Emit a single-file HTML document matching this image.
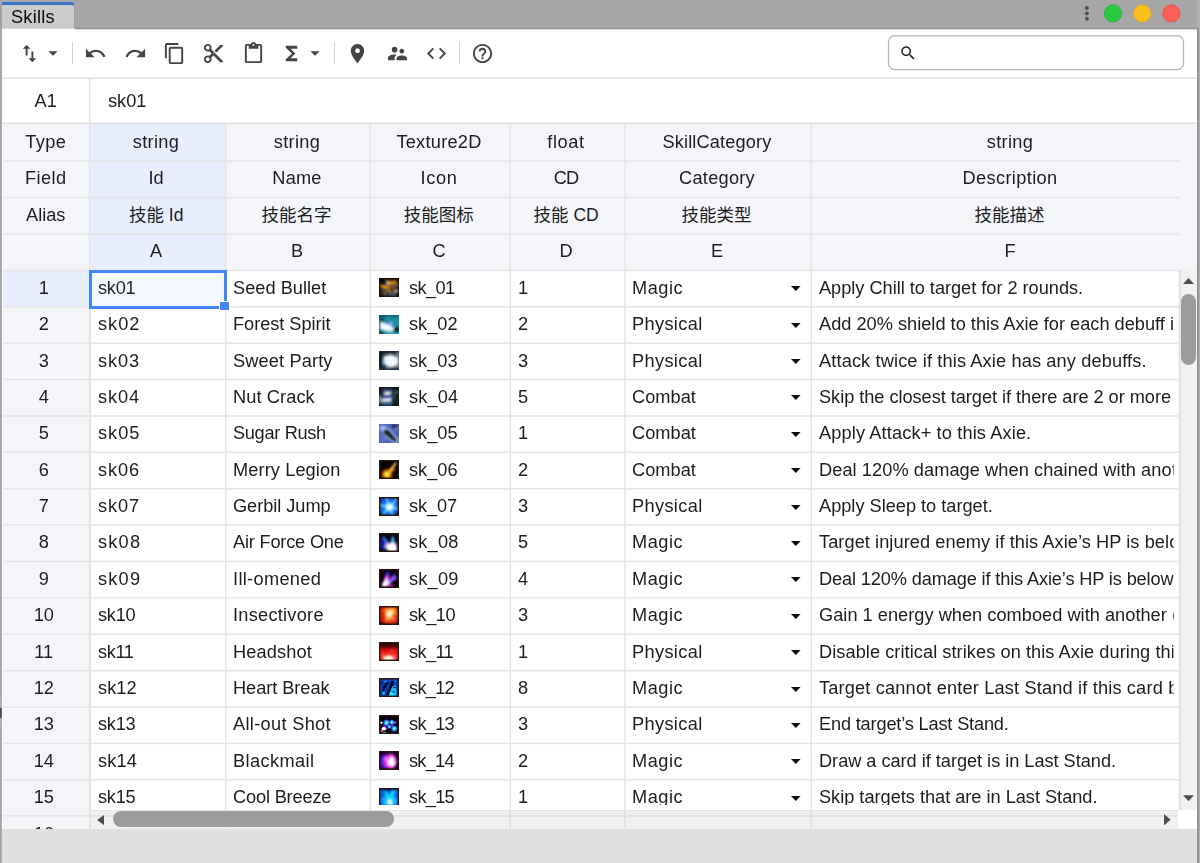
<!DOCTYPE html>
<html lang="en"><head><meta charset="utf-8"><title>Skills</title>
<style>

*{box-sizing:border-box;margin:0;padding:0}
html,body{width:1200px;height:863px;overflow:hidden;background:#e0e0e0}
body{position:relative;font-family:"Liberation Sans", "Noto Sans CJK SC", sans-serif;font-size:17.5px;color:#1d1d1f;line-height:1}
.abs{position:absolute}
.t{position:absolute;white-space:nowrap;line-height:20px;height:20px;transform:scaleX(1.04);transform-origin:0 50%}
.c{text-align:center;transform-origin:50% 50%}
.n{transform:none}
.vl{position:absolute;width:1px;background:#e1e1e1}
.hl{position:absolute;height:1px;background:#e1e1e1}
.ic{position:absolute;width:23px;height:23px;fill:#454545}
.sep{position:absolute;width:1px;top:41.5px;height:22.5px;background:#d2d2d2}
.dd{position:absolute;width:9.6px;height:5px}
.sk{position:absolute;width:20px;height:19px;overflow:hidden}

</style></head><body>
<div class="abs" style="left:0;top:0;width:1200px;height:29px;background:#a6a6a6"></div>
<div class="abs" style="left:1.7px;top:1.7px;width:73.3px;height:27px;background:#cbcbcb;border-top:3px solid #3a74c9;border-radius:0 4.5px 0 0;border-right:1px solid #a0a0a0"></div>
<div class="t" style="left:10.7px;top:6.5px;color:#0b0b0b;letter-spacing:.2px">Skills</div>
<svg class="abs" style="left:1070px;top:0;width:127px;height:28px" viewBox="1070 0 127 28"><circle cx="1086.900" cy="8" r="1.950" fill="#4e4e4e"/><circle cx="1086.900" cy="13.400" r="1.950" fill="#4e4e4e"/><circle cx="1086.900" cy="18.800" r="1.950" fill="#4e4e4e"/><circle cx="1113.100" cy="13.400" r="8.600" fill="#2aca44" stroke="#22b03a" stroke-width=".8"/><circle cx="1142.200" cy="13.400" r="8.600" fill="#fdc01a" stroke="#e6aa14" stroke-width=".8"/><circle cx="1171.300" cy="13.400" r="8.600" fill="#fe5f58" stroke="#e84e47" stroke-width=".8"/></svg>
<div class="abs" style="left:1.7px;top:28px;width:1195.4px;height:95.1px;background:#fff"></div>
<svg class="abs" style="left:0;top:26px;width:1200px;height:6px" viewBox="0 26 1200 6"><rect x="1.700" y="28" width="73.300" height=".75" fill="#cbcbcb"/><rect x="75" y="27.800" width="1125" height="1.500" fill="#919191"/></svg>
<svg class="abs" style="left:0;top:0;width:1200px;height:130px" viewBox="0 0 1200 130"><g stroke="#e1e1e1" stroke-width="1.46"><path d="M1.700 78.200H1197.300"/><path d="M1.700 123.300H1197.300"/><path d="M89.600 78.200V123.300"/></g></svg>
<svg class="ic" style="left:18.10px;top:41.90px;width:23px;height:23px" viewBox="0 0 24 24"><path d="M16 17.01V10h-2v7.01h-3L15 21l4-3.99h-3zM9 3L5 6.99h3V14h2V6.99h3L9 3z"/></svg>
<svg class="ic" style="left:41.70px;top:42.30px;width:22px;height:22px" viewBox="0 0 24 24"><path d="M7 10l5 5 5-5z"/></svg>
<div class="sep" style="left:72.1px"></div>
<svg class="ic" style="left:84.00px;top:41.90px;width:23px;height:23px" viewBox="0 0 24 24"><path d="M12.5 8c-2.65 0-5.05.99-6.9 2.6L2 7v9h9l-3.62-3.62c1.39-1.16 3.16-1.88 5.12-1.88 3.54 0 6.55 2.31 7.6 5.5l2.37-.78C21.08 11.03 17.15 8 12.5 8z"/></svg>
<svg class="ic" style="left:123.70px;top:41.90px;width:23px;height:23px" viewBox="0 0 24 24"><path d="M18.4 10.6C16.55 8.99 14.15 8 11.5 8c-4.65 0-8.58 3.03-9.96 7.22L3.9 16c1.05-3.19 4.05-5.5 7.6-5.5 1.95 0 3.73.72 5.12 1.88L13 16h9V7l-3.6 3.6z"/></svg>
<svg class="ic" style="left:162.70px;top:41.90px;width:23px;height:23px" viewBox="0 0 24 24"><path d="M16 1H4c-1.1 0-2 .9-2 2v14h2V3h12V1zm3 4H8c-1.1 0-2 .9-2 2v14c0 1.1.9 2 2 2h11c1.1 0 2-.9 2-2V7c0-1.1-.9-2-2-2zm0 16H8V7h11v14z"/></svg>
<svg class="ic" style="left:202.00px;top:41.90px;width:23px;height:23px" viewBox="0 0 24 24"><path d="M9.64 7.64c.23-.5.36-1.05.36-1.64 0-2.21-1.79-4-4-4S2 3.79 2 6s1.79 4 4 4c.59 0 1.14-.13 1.64-.36L10 12l-2.36 2.36C7.14 14.13 6.59 14 6 14c-2.21 0-4 1.79-4 4s1.79 4 4 4 4-1.79 4-4c0-.59-.13-1.14-.36-1.64L12 14l7 7h3v-1L9.64 7.64zM6 8c-1.1 0-2-.89-2-2s.9-2 2-2 2 .89 2 2-.9 2-2 2zm0 12c-1.1 0-2-.89-2-2s.9-2 2-2 2 .89 2 2-.9 2-2 2zm6-7.5c-.28 0-.5-.22-.5-.5s.22-.5.5-.5.5.22.5.5-.22.5-.5.5zM19 3l-6 6 2 2 7-7V3z"/></svg>
<svg class="ic" style="left:241.50px;top:42.00px;width:23px;height:23px" viewBox="0 0 24 24"><path d="M19 2h-4.18C14.4.84 13.3 0 12 0c-1.3 0-2.4.84-2.82 2H5c-1.1 0-2 .9-2 2v16c0 1.1.9 2 2 2h14c1.1 0 2-.9 2-2V4c0-1.1-.9-2-2-2zm-7 0c.55 0 1 .45 1 1s-.45 1-1 1-1-.45-1-1 .45-1 1-1zm7 18H5V4h2v3h10V4h2v16z"/></svg>
<svg class="ic" style="left:279.70px;top:41.90px;width:23px;height:23px" viewBox="0 0 24 24"><path d="M18 4H6v2l6.5 6L6 18v2h12v-3h-7l5-5-5-5h7z"/></svg>
<svg class="ic" style="left:303.75px;top:42.30px;width:22px;height:22px" viewBox="0 0 24 24"><path d="M7 10l5 5 5-5z"/></svg>
<div class="sep" style="left:334.3px"></div>
<svg class="ic" style="left:345.90px;top:41.90px;width:23px;height:23px" viewBox="0 0 24 24"><path d="M12 2C8.13 2 5 5.13 5 9c0 5.25 7 13 7 13s7-7.75 7-13c0-3.87-3.13-7-7-7zm0 9.5c-1.38 0-2.5-1.12-2.5-2.5s1.12-2.5 2.5-2.5 2.5 1.12 2.5 2.5-1.12 2.5-2.5 2.5z"/></svg>
<svg class="ic" style="left:385.50px;top:41.90px;width:23px;height:23px" viewBox="0 0 24 24"><path d="M16.5 12c1.38 0 2.49-1.12 2.49-2.5S17.88 7 16.5 7C15.12 7 14 8.12 14 9.5s1.12 2.5 2.5 2.5zM9 11c1.66 0 2.99-1.34 2.99-3S10.66 5 9 5C7.34 5 6 6.34 6 8s1.34 3 3 3zm7.5 3c-1.83 0-5.5.92-5.5 2.75V19h11v-2.250c0-1.83-3.67-2.75-5.5-2.75zM9 13c-2.33 0-7 1.17-7 3.5V19h7v-2.25c0-.85.33-2.34 2.37-3.47C10.5 13.1 9.66 13 9 13z"/></svg>
<svg class="ic" style="left:424.50px;top:41.90px;width:23px;height:23px" viewBox="0 0 24 24"><path d="M9.4 16.6L4.8 12l4.6-4.6L8 6l-6 6 6 6 1.4-1.4zm5.2 0l4.6-4.6-4.6-4.6L16 6l6 6-6 6-1.4-1.4z"/></svg>
<div class="sep" style="left:459.3px"></div>
<svg class="ic" style="left:470.90px;top:41.90px;width:23px;height:23px" viewBox="0 0 24 24"><path d="M11 18h2v-2h-2v2zm1-16C6.48 2 2 6.48 2 12s4.48 10 10 10 10-4.48 10-10S17.52 2 12 2zm0 18c-4.41 0-8-3.59-8-8s3.59-8 8-8 8 3.59 8 8-3.59 8-8 8zm0-14c-2.21 0-4 1.79-4 4h2c0-1.1.9-2 2-2s2 .9 2 2c0 2-3 1.75-3 5h2c0-2.250 3-2.500 3-5 0-2.210-1.790-4-4-4z"/></svg>
<svg class="abs" style="left:880px;top:30px;width:312px;height:46px" viewBox="880 30 312 46"><rect x="888.500" y="35.900" width="295" height="33.600" rx="5.800" fill="#fff" stroke="#b6b6b6" stroke-width="1.250"/><path d="M893 35.600H1179" stroke="#c4c4c4" stroke-width=".7" fill="none"/></svg>
<svg class="ic" style="left:898.9px;top:43.7px;width:18.1px;height:18.1px;fill:#262626" viewBox="0 0 24 24"><path d="M15.5 14h-.79l-.28-.27C15.41 12.59 16 11.11 16 9.500 16 5.910 13.090 3 9.500 3S3 5.910 3 9.500 5.910 16 9.500 16c1.610 0 3.090-.590 4.230-1.570l.270.280v.790l5 4.990L20.490 19l-4.990-5zm-6 0C7.010 14 5 11.990 5 9.500S7.010 5 9.500 5 14 7.010 14 9.500 11.990 14 9.500 14z"/></svg>
<div class="t c" style="left:1.7px;width:87.5px;top:90.9px">A1</div>
<div class="t" style="left:108px;top:90.9px">sk01</div>
<div class="abs" style="left:1.7px;top:124.1px;width:1195.4px;height:146.2px;background:#f4f5f9"></div>
<div class="abs" style="left:1.7px;top:270.3px;width:88px;height:558.3px;background:#f4f5f9"></div>
<div class="abs" style="left:90.7px;top:271.3px;width:1089.0px;height:557.3px;background:#fff"></div>
<div class="abs" style="left:90.7px;top:124.1px;width:135.1px;height:146.2px;background:#e8eefd"></div>
<div class="abs" style="left:1.7px;top:271.3px;width:88px;height:35.4px;background:#e8eefd"></div>
<svg class="abs" style="left:0;top:0;width:1200px;height:863px" viewBox="0 0 1200 863"><g stroke="#e5e5e5" stroke-width="1.46" fill="none"><path d="M1.700 161.10H1179.7"/><path d="M1.700 197.50H1179.7"/><path d="M1.700 233.90H1179.7"/><path d="M1.700 270.50H1179.7"/><path d="M1.700 306.79H1179.7"/><path d="M1.700 343.17H1179.7"/><path d="M1.700 379.56H1179.7"/><path d="M1.700 415.94H1179.7"/><path d="M1.700 452.33H1179.7"/><path d="M1.700 488.72H1179.7"/><path d="M1.700 525.10H1179.7"/><path d="M1.700 561.49H1179.7"/><path d="M1.700 597.87H1179.7"/><path d="M1.700 634.26H1179.7"/><path d="M1.700 670.65H1179.7"/><path d="M1.700 707.03H1179.7"/><path d="M1.700 743.42H1179.7"/><path d="M1.700 779.80H1179.7"/><path d="M1.700 815.89H89.7"/><path d="M89.70 124.1V828.6"/><path d="M225.80 124.1V805.0"/><path d="M370.30 124.1V805.0"/><path d="M510.30 124.1V805.0"/><path d="M625.00 124.1V805.0"/><path d="M811.30 124.1V805.0"/><path d="M1179.30 270.3V810.0"/></g></svg>
<div class="t c" style="left:1.7px;width:87.5px;top:131.8px;letter-spacing:0.321px">Type</div>
<div class="t c" style="left:56.2px;width:200px;top:131.8px;letter-spacing:0.314px">string</div>
<div class="t c" style="left:196.6px;width:200px;top:131.8px;letter-spacing:0.314px">string</div>
<div class="t c" style="left:338.8px;width:200px;top:131.8px;letter-spacing:0.240px">Texture2D</div>
<div class="t c" style="left:466.1px;width:200px;top:131.8px;letter-spacing:0.553px">float</div>
<div class="t c" style="left:616.6px;width:200px;top:131.8px;letter-spacing:0.144px">SkillCategory</div>
<div class="t c" style="left:909.5px;width:200px;top:131.8px;letter-spacing:0.314px">string</div>
<div class="t c" style="left:1.7px;width:87.5px;top:168.3px;letter-spacing:0.385px">Field</div>
<div class="t c" style="left:56.2px;width:200px;top:168.3px">Id</div>
<div class="t c" style="left:196.6px;width:200px;top:168.3px;letter-spacing:0.192px">Name</div>
<div class="t c" style="left:338.8px;width:200px;top:168.3px;letter-spacing:0.641px">Icon</div>
<div class="t c" style="left:466.1px;width:200px;top:168.3px;letter-spacing:-0.865px">CD</div>
<div class="t c" style="left:616.6px;width:200px;top:168.3px;letter-spacing:0.247px">Category</div>
<div class="t c" style="left:909.5px;width:200px;top:168.3px;letter-spacing:0.356px">Description</div>
<div class="t c" style="left:1.7px;width:87.5px;top:204.7px">Alias</div>
<div class="t c n" style="left:56.2px;width:200px;top:204.7px">技能 Id</div>
<div class="t c n" style="left:196.6px;width:200px;top:204.7px">技能名字</div>
<div class="t c n" style="left:338.8px;width:200px;top:204.7px">技能图标</div>
<div class="t c n" style="left:466.1px;width:200px;top:204.7px">技能 CD</div>
<div class="t c n" style="left:616.6px;width:200px;top:204.7px">技能类型</div>
<div class="t c n" style="left:909.5px;width:200px;top:204.7px">技能描述</div>
<div class="t c" style="left:56.2px;width:200px;top:241.1px">A</div>
<div class="t c" style="left:196.6px;width:200px;top:241.1px">B</div>
<div class="t c" style="left:338.8px;width:200px;top:241.1px">C</div>
<div class="t c" style="left:466.1px;width:200px;top:241.1px">D</div>
<div class="t c" style="left:616.6px;width:200px;top:241.1px">E</div>
<div class="t c" style="left:909.5px;width:200px;top:241.1px">F</div>
<div class="t c" style="left:0.3px;width:87.5px;top:277.74px">1</div>
<div class="t" style="left:97.8px;top:277.74px;letter-spacing:-0.256px">sk01</div>
<div class="t" style="left:232.7px;top:277.74px;letter-spacing:0.018px">Seed Bullet</div>
<div class="sk" style="left:378.6px;top:278.20px"><svg width="20" height="19" viewBox="0 0 20 19"><defs><filter id="b1" x="-30%" y="-30%" width="160%" height="160%"><feGaussianBlur stdDeviation="0.95"/></filter></defs><rect width="20" height="19" fill="#15100c"/><g filter="url(#b1)"><polygon points="7,3.5 17,3 18,6 9,7" fill="#e8920f"/><ellipse cx="8.3" cy="4.8" rx="1.5" ry="1.2" fill="#f4ecd0"/><polygon points="1.5,6.5 9,7.5 13,10 6,11 1.5,9" fill="#dd970f"/><ellipse cx="14.5" cy="9.5" rx="2" ry="1.2" fill="#c84a10"/><polygon points="9,7 16,7.500 18,9 11,8.500" fill="#6a7680" opacity="0.8"/><polygon points="8,11 13,12.5 12,14.5 8.5,13.5" fill="#d8a020"/><rect x="2.5" y="10.5" width="2.5" height="6.5" fill="#4a443e"/><rect x="6.2" y="12" width="1.2" height="4.5" fill="#c8c0b0"/><polygon points="14,12 19,11.5 19,14 15,14.5" fill="#c0bca8"/><rect x="9" y="15" width="8" height="2" fill="#5a6878"/><ellipse cx="18" cy="7" rx="1.3" ry="2" fill="#7a7040"/><rect x="0" y="0" width="20" height="1.6" fill="#0c0806"/><rect x="0" y="17.6" width="20" height="1.4" fill="#0c0806"/></g></svg></div>
<div class="t" style="left:409.1px;top:277.74px;letter-spacing:-0.590px">sk_01</div>
<div class="t" style="left:518.2px;top:277.74px">1</div>
<div class="t" style="left:631.6px;top:277.74px;letter-spacing:0.481px">Magic</div>
<svg class="dd" style="left:791.1px;top:286.25px" viewBox="0 0 9.600 5"><path d="M0 0H9.600L4.800 5z" fill="#0c0c0c"/></svg>
<div class="t" style="left:819.3px;top:277.74px;width:341.44px;overflow:hidden;letter-spacing:-0.026px">Apply Chill to target for 2 rounds.</div>
<div class="t c" style="left:0.3px;width:87.5px;top:314.13px">2</div>
<div class="t" style="left:97.8px;top:314.13px;letter-spacing:0.961px">sk02</div>
<div class="t" style="left:232.7px;top:314.13px;letter-spacing:-0.040px">Forest Spirit</div>
<div class="sk" style="left:378.6px;top:314.59px"><svg width="20" height="19" viewBox="0 0 20 19"><defs><filter id="b2" x="-30%" y="-30%" width="160%" height="160%"><feGaussianBlur stdDeviation="1"/></filter><linearGradient id="g2" x1="0" x2="1" y1="0" y2="0"><stop offset="0" stop-color="#0f6a7c"/><stop offset="1" stop-color="#1c98b0"/></linearGradient></defs><rect width="20" height="19" fill="url(#g2)"/><g filter="url(#b2)"><rect x="0" y="0" width="20" height="1.5" fill="#08303a"/><ellipse cx="3.5" cy="5.5" rx="2" ry="1.5" fill="#0a2a34"/><polygon points="8,1 12,1 7,8 5,8" fill="#2ab0b0" opacity="0.6"/><ellipse cx="11.5" cy="8.5" rx="2.5" ry="2.5" fill="#7088e0"/><polygon points="1,7.5 6,8 11,10 15.5,13 15,16.5 8,16.5 1,14" fill="#e4f2ff"/><ellipse cx="6" cy="12" rx="4" ry="2.6" fill="#f4faff"/><polygon points="0,15 5,17 5,19 0,19" fill="#0a3a48"/><polygon points="15.5,12.5 20,12 20,17.5 13.5,17.5" fill="#0a1216"/><rect x="5" y="17.6" width="15" height="1.4" fill="#30b8d0"/><ellipse cx="3" cy="7.5" rx="0.8" ry="0.8" fill="#fff"/><ellipse cx="12.5" cy="8" rx="0.7" ry="0.7" fill="#e8f0ff"/></g></svg></div>
<div class="t" style="left:409.1px;top:314.13px;letter-spacing:-0.013px">sk_02</div>
<div class="t" style="left:518.2px;top:314.13px">2</div>
<div class="t" style="left:631.6px;top:314.13px;letter-spacing:0.330px">Physical</div>
<svg class="dd" style="left:791.1px;top:322.64px" viewBox="0 0 9.600 5"><path d="M0 0H9.600L4.800 5z" fill="#0c0c0c"/></svg>
<div class="t" style="left:819.3px;top:314.13px;width:341.44px;overflow:hidden;letter-spacing:0.005px">Add 20% shield to this Axie for each debuff it has.</div>
<div class="t c" style="left:0.3px;width:87.5px;top:350.51px">3</div>
<div class="t" style="left:97.8px;top:350.51px;letter-spacing:0.833px">sk03</div>
<div class="t" style="left:232.7px;top:350.51px;letter-spacing:0.126px">Sweet Party</div>
<div class="sk" style="left:378.6px;top:350.97px"><svg width="20" height="19" viewBox="0 0 20 19"><defs><filter id="b3" x="-30%" y="-30%" width="160%" height="160%"><feGaussianBlur stdDeviation="1"/></filter></defs><rect width="20" height="19" fill="#2a3846"/><g filter="url(#b3)"><rect x="0" y="0" width="3.5" height="19" fill="#0e1820"/><rect x="0" y="0" width="20" height="2.5" fill="#182430"/><rect x="17.5" y="2" width="2.5" height="15" fill="#8a98a6"/><ellipse cx="11.8" cy="10" rx="7.3" ry="6.2" fill="#e9f3fc"/><ellipse cx="8" cy="7" rx="3.2" ry="2.6" fill="#eef6fd"/><ellipse cx="13.5" cy="11.5" rx="5" ry="4" fill="#f4f9fe"/><ellipse cx="4.8" cy="11" rx="0.9" ry="2.5" fill="#6accff"/><ellipse cx="4.6" cy="5.6" rx="0.8" ry="0.8" fill="#8a6a40"/><rect x="0" y="16.8" width="20" height="2.2" fill="#1a2a3c"/><ellipse cx="8" cy="17.6" rx="2" ry="0.7" fill="#5a7aa0"/></g></svg></div>
<div class="t" style="left:409.1px;top:350.51px;letter-spacing:-0.014px">sk_03</div>
<div class="t" style="left:518.2px;top:350.51px">3</div>
<div class="t" style="left:631.6px;top:350.51px;letter-spacing:0.330px">Physical</div>
<svg class="dd" style="left:791.1px;top:359.02px" viewBox="0 0 9.600 5"><path d="M0 0H9.600L4.800 5z" fill="#0c0c0c"/></svg>
<div class="t" style="left:819.3px;top:350.51px;width:341.44px;overflow:hidden;letter-spacing:0.122px">Attack twice if this Axie has any debuffs.</div>
<div class="t c" style="left:0.3px;width:87.5px;top:386.90px">4</div>
<div class="t" style="left:97.8px;top:386.90px;letter-spacing:0.898px">sk04</div>
<div class="t" style="left:232.7px;top:386.90px;letter-spacing:0.096px">Nut Crack</div>
<div class="sk" style="left:378.6px;top:387.36px"><svg width="20" height="19" viewBox="0 0 20 19"><defs><filter id="b4" x="-30%" y="-30%" width="160%" height="160%"><feGaussianBlur stdDeviation="0.9"/></filter></defs><rect width="20" height="19" fill="#0e161e"/><g filter="url(#b4)"><rect x="4" y="2.5" width="9.5" height="15.5" fill="#3a5a88"/><rect x="5" y="3" width="8" height="0.8" fill="#4a5ab0"/><polygon points="6,5.2 11.5,5 11.5,7.5 5,8" fill="#f0f0ee"/><rect x="4.5" y="8" width="9" height="1.5" fill="#283848"/><rect x="4" y="9.5" width="9.5" height="2" fill="#4868d8"/><polygon points="2.5,12 12,11.5 12,14 3,14.5" fill="#f4f8fa"/><rect x="3" y="15" width="9.5" height="3" fill="#3a7090"/><rect x="13.5" y="2" width="6.5" height="16" fill="#16241e"/><rect x="14" y="6" width="2" height="4" fill="#2a4a30"/><rect x="16.5" y="4.5" width="1.5" height="1.5" fill="#8a9090"/><rect x="15.5" y="10.5" width="1.2" height="1.2" fill="#7a8080"/><polygon points="0,8 2.5,10 2.5,16 0,16" fill="#98a0a0"/><rect x="0" y="0" width="3.5" height="8" fill="#1a2024"/><rect x="0" y="0" width="20" height="1.6" fill="#0a0e12"/><rect x="0" y="17.8" width="20" height="1.2" fill="#0a0e12"/></g></svg></div>
<div class="t" style="left:409.1px;top:386.90px;letter-spacing:0.131px">sk_04</div>
<div class="t" style="left:518.2px;top:386.90px">5</div>
<div class="t" style="left:631.6px;top:386.90px;letter-spacing:0.019px">Combat</div>
<svg class="dd" style="left:791.1px;top:395.41px" viewBox="0 0 9.600 5"><path d="M0 0H9.600L4.800 5z" fill="#0c0c0c"/></svg>
<div class="t" style="left:819.3px;top:386.90px;width:341.44px;overflow:hidden;letter-spacing:-0.043px">Skip the closest target if there are 2 or more enemies.</div>
<div class="t c" style="left:0.3px;width:87.5px;top:423.28px">5</div>
<div class="t" style="left:97.8px;top:423.28px;letter-spacing:0.961px">sk05</div>
<div class="t" style="left:232.7px;top:423.28px;letter-spacing:-0.310px">Sugar Rush</div>
<div class="sk" style="left:378.6px;top:423.74px"><svg width="20" height="19" viewBox="0 0 20 19"><defs><filter id="b5" x="-30%" y="-30%" width="160%" height="160%"><feGaussianBlur stdDeviation="0.8"/></filter></defs><rect width="20" height="19" fill="#4a62b8"/><g filter="url(#b5)"><ellipse cx="4" cy="4" rx="4" ry="3" fill="#8aa2e8"/><ellipse cx="3" cy="4.5" rx="0.8" ry="0.8" fill="#e8f0ff"/><ellipse cx="6" cy="4" rx="0.8" ry="0.8" fill="#e8f0ff"/><polygon points="12.5,1 18,0.5 19,3 14,4.5" fill="#262640"/><polygon points="15,6 18.5,2.5 19,4 16,8" fill="#8a7ae0"/><ellipse cx="4" cy="15" rx="4" ry="3" fill="#5a72d0"/><ellipse cx="17" cy="10" rx="2" ry="2.5" fill="#3a52a8"/><polygon points="2.5,6.5 7.5,3.5 11,5 19.5,15.5 19.5,19 14,19 3.5,9.5" fill="#a6ccf2"/><polygon points="3.6,7.2 7.5,4.7 10.4,6.2 18.4,16.2 17.5,18 14.2,17.6 4.6,9.4" fill="#1e1a2a"/></g></svg></div>
<div class="t" style="left:409.1px;top:423.28px;letter-spacing:-0.014px">sk_05</div>
<div class="t" style="left:518.2px;top:423.28px">1</div>
<div class="t" style="left:631.6px;top:423.28px;letter-spacing:0.019px">Combat</div>
<svg class="dd" style="left:791.1px;top:431.79px" viewBox="0 0 9.600 5"><path d="M0 0H9.600L4.800 5z" fill="#0c0c0c"/></svg>
<div class="t" style="left:819.3px;top:423.28px;width:341.44px;overflow:hidden;letter-spacing:0.121px">Apply Attack+ to this Axie.</div>
<div class="t c" style="left:0.3px;width:87.5px;top:459.67px">6</div>
<div class="t" style="left:97.8px;top:459.67px;letter-spacing:0.833px">sk06</div>
<div class="t" style="left:232.7px;top:459.67px;letter-spacing:0.097px">Merry Legion</div>
<div class="sk" style="left:378.6px;top:460.13px"><svg width="20" height="19" viewBox="0 0 20 19"><defs><filter id="b6" x="-30%" y="-30%" width="160%" height="160%"><feGaussianBlur stdDeviation="1"/></filter><radialGradient id="g6"><stop offset="0" stop-color="#fff34a"/><stop offset=".35" stop-color="#ffb010"/><stop offset=".7" stop-color="#e05a08" stop-opacity=".8"/><stop offset="1" stop-color="#e05a08" stop-opacity="0"/></radialGradient></defs><rect width="20" height="19" fill="#080303"/><g filter="url(#b6)"><circle cx="8" cy="14.500" r="6.500" fill="url(#g6)"/><ellipse cx="14" cy="10" rx="2.5" ry="2" fill="#c8400a" opacity="0.8"/><polygon points="7.5,13 16.3,2.3 17.7,3.5 11.2,14" fill="#f59a1a"/><polygon points="9.5,11.5 16.5,3 17,3.5 10.5,12" fill="#ffe46a"/><ellipse cx="16.8" cy="3" rx="0.8" ry="0.8" fill="#d8f080"/><ellipse cx="8" cy="14.5" rx="2.4" ry="2" fill="#fff34a"/></g><rect x="0.700" y="0.700" width="18.600" height="17.600" fill="none" stroke="#2c170e" stroke-width="1.400"/></svg></div>
<div class="t" style="left:409.1px;top:459.67px;letter-spacing:-0.014px">sk_06</div>
<div class="t" style="left:518.2px;top:459.67px">2</div>
<div class="t" style="left:631.6px;top:459.67px;letter-spacing:0.019px">Combat</div>
<svg class="dd" style="left:791.1px;top:468.18px" viewBox="0 0 9.600 5"><path d="M0 0H9.600L4.800 5z" fill="#0c0c0c"/></svg>
<div class="t" style="left:819.3px;top:459.67px;width:341.44px;overflow:hidden;letter-spacing:0.065px">Deal 120% damage when chained with another card.</div>
<div class="t c" style="left:0.3px;width:87.5px;top:496.06px">7</div>
<div class="t" style="left:97.8px;top:496.06px;letter-spacing:0.833px">sk07</div>
<div class="t" style="left:232.7px;top:496.06px;letter-spacing:-0.048px">Gerbil Jump</div>
<div class="sk" style="left:378.6px;top:496.52px"><svg width="20" height="19" viewBox="0 0 20 19"><defs><filter id="b7" x="-30%" y="-30%" width="160%" height="160%"><feGaussianBlur stdDeviation="1"/></filter><radialGradient id="g7" cx=".52" cy=".53" r=".62"><stop offset="0" stop-color="#fff"/><stop offset=".3" stop-color="#4ec4ff"/><stop offset=".62" stop-color="#0f4ee6"/><stop offset="1" stop-color="#040a3c"/></radialGradient></defs><rect width="20" height="19" fill="#040a3c"/><g filter="url(#b7)"><rect width="20" height="19" fill="url(#g7)"/><line x1="10.500" y1="10" x2="21.26" y2="12.29" stroke="#62dcff" stroke-width="1.4"/><line x1="10.500" y1="10" x2="18.67" y2="17.36" stroke="#1a6cf8" stroke-width="2.2"/><line x1="10.500" y1="10" x2="13.90" y2="20.46" stroke="#62dcff" stroke-width="1.4"/><line x1="10.500" y1="10" x2="8.21" y2="20.76" stroke="#1a6cf8" stroke-width="2.2"/><line x1="10.500" y1="10" x2="3.14" y2="18.17" stroke="#62dcff" stroke-width="1.4"/><line x1="10.500" y1="10" x2="0.04" y2="13.40" stroke="#1a6cf8" stroke-width="2.2"/><line x1="10.500" y1="10" x2="-0.26" y2="7.71" stroke="#62dcff" stroke-width="1.4"/><line x1="10.500" y1="10" x2="2.33" y2="2.64" stroke="#1a6cf8" stroke-width="2.2"/><line x1="10.500" y1="10" x2="7.10" y2="-0.46" stroke="#62dcff" stroke-width="1.4"/><line x1="10.500" y1="10" x2="12.79" y2="-0.76" stroke="#1a6cf8" stroke-width="2.2"/><line x1="10.500" y1="10" x2="17.86" y2="1.83" stroke="#62dcff" stroke-width="1.4"/><line x1="10.500" y1="10" x2="20.96" y2="6.60" stroke="#1a6cf8" stroke-width="2.2"/><ellipse cx="10.5" cy="10" rx="4.2" ry="3.8" fill="#8af4ff"/><ellipse cx="10.7" cy="10.2" rx="2.6" ry="2.3" fill="#fff"/><polygon points="0,19 0,14 5,19" fill="#02041a"/><polygon points="20,19 20,14 14,19" fill="#02041a"/><polygon points="0,0 4,0 0,4" fill="#030824"/></g><rect x="0.700" y="0.700" width="18.600" height="17.600" fill="none" stroke="#2c170e" stroke-width="1.400"/></svg></div>
<div class="t" style="left:409.1px;top:496.06px;letter-spacing:-0.110px">sk_07</div>
<div class="t" style="left:518.2px;top:496.06px">3</div>
<div class="t" style="left:631.6px;top:496.06px;letter-spacing:0.330px">Physical</div>
<svg class="dd" style="left:791.1px;top:504.57px" viewBox="0 0 9.600 5"><path d="M0 0H9.600L4.800 5z" fill="#0c0c0c"/></svg>
<div class="t" style="left:819.3px;top:496.06px;width:341.44px;overflow:hidden;letter-spacing:-0.010px">Apply Sleep to target.</div>
<div class="t c" style="left:0.3px;width:87.5px;top:532.44px">8</div>
<div class="t" style="left:97.8px;top:532.44px;letter-spacing:1.153px">sk08</div>
<div class="t" style="left:232.7px;top:532.44px;letter-spacing:-0.192px">Air Force One</div>
<div class="sk" style="left:378.6px;top:532.90px"><svg width="20" height="19" viewBox="0 0 20 19"><defs><filter id="b8" x="-30%" y="-30%" width="160%" height="160%"><feGaussianBlur stdDeviation="1"/></filter></defs><rect width="20" height="19" fill="#03041a"/><g filter="url(#b8)"><ellipse cx="3.5" cy="11" rx="3" ry="6" fill="#0a1c9a"/><polygon points="3,3 5,3.5 10.5,10.5 7.5,12" fill="#3a78e8"/><polygon points="13.2,3 14.2,3 16,10.5 11.5,10.5" fill="#48c8f0"/><ellipse cx="9" cy="13.5" rx="3.2" ry="3.2" fill="#f0a0ff"/><ellipse cx="6.5" cy="14.5" rx="1" ry="1.4" fill="#40c0c0"/><ellipse cx="13" cy="14.5" rx="5" ry="4.8" fill="#fff"/><rect x="9" y="15" width="9" height="3.5" fill="#fff"/><ellipse cx="17" cy="12" rx="1.3" ry="2" fill="#e8a0f8"/></g><rect x="0.700" y="0.700" width="18.600" height="17.600" fill="none" stroke="#2c170e" stroke-width="1.400"/></svg></div>
<div class="t" style="left:409.1px;top:532.44px;letter-spacing:0.179px">sk_08</div>
<div class="t" style="left:518.2px;top:532.44px">5</div>
<div class="t" style="left:631.6px;top:532.44px;letter-spacing:0.481px">Magic</div>
<svg class="dd" style="left:791.1px;top:540.95px" viewBox="0 0 9.600 5"><path d="M0 0H9.600L4.800 5z" fill="#0c0c0c"/></svg>
<div class="t" style="left:819.3px;top:532.44px;width:341.44px;overflow:hidden;letter-spacing:0.060px">Target injured enemy if this Axie’s HP is below 50%.</div>
<div class="t c" style="left:0.3px;width:87.5px;top:568.83px">9</div>
<div class="t" style="left:97.8px;top:568.83px;letter-spacing:1.153px">sk09</div>
<div class="t" style="left:232.7px;top:568.83px;letter-spacing:0.310px">Ill-omened</div>
<div class="sk" style="left:378.6px;top:569.29px"><svg width="20" height="19" viewBox="0 0 20 19"><defs><filter id="b9" x="-30%" y="-30%" width="160%" height="160%"><feGaussianBlur stdDeviation="1"/></filter></defs><rect width="20" height="19" fill="#050208"/><g filter="url(#b9)"><polygon points="7.5,2.5 11,3.5 9,12 3.5,15" fill="#3a20f0"/><polygon points="6.5,6.5 10.5,7 9,14 2.5,17.5" fill="#e838e8"/><polygon points="16,4.5 18.5,9.5 9,16 6.5,13" fill="#3a30f0"/><polygon points="15,6.5 17,10 9,15 8,12" fill="#a050f8"/><polygon points="4,15 15,16 14,17.8 4,18" fill="#f040d8"/><polygon points="3,17.5 7.5,8 8.5,12.5 12,13 6,17.5" fill="#fff"/><ellipse cx="5.5" cy="15.5" rx="2.4" ry="2.2" fill="#fff"/></g><rect x="0.700" y="0.700" width="18.600" height="17.600" fill="none" stroke="#2c170e" stroke-width="1.400"/></svg></div>
<div class="t" style="left:409.1px;top:568.83px;letter-spacing:0.179px">sk_09</div>
<div class="t" style="left:518.2px;top:568.83px">4</div>
<div class="t" style="left:631.6px;top:568.83px;letter-spacing:0.481px">Magic</div>
<svg class="dd" style="left:791.1px;top:577.34px" viewBox="0 0 9.600 5"><path d="M0 0H9.600L4.800 5z" fill="#0c0c0c"/></svg>
<div class="t" style="left:819.3px;top:568.83px;width:341.44px;overflow:hidden;letter-spacing:-0.134px">Deal 120% damage if this Axie’s HP is below 50%.</div>
<div class="t c" style="left:0.3px;width:87.5px;top:605.21px">10</div>
<div class="t" style="left:97.8px;top:605.21px;letter-spacing:-0.256px">sk10</div>
<div class="t" style="left:232.7px;top:605.21px;letter-spacing:0.240px">Insectivore</div>
<div class="sk" style="left:378.6px;top:605.67px"><svg width="20" height="19" viewBox="0 0 20 19"><defs><filter id="b10" x="-30%" y="-30%" width="160%" height="160%"><feGaussianBlur stdDeviation="0.8"/></filter><radialGradient id="g10" cx=".54" cy=".42" r=".62"><stop offset="0" stop-color="#fff"/><stop offset=".2" stop-color="#ffe070"/><stop offset=".42" stop-color="#ff8a14"/><stop offset=".72" stop-color="#e0280e"/><stop offset="1" stop-color="#600"/></radialGradient></defs><rect width="20" height="19" fill="#6a0a04"/><g filter="url(#b10)"><rect width="20" height="19" fill="url(#g10)"/><rect x="1" y="2" width="5.5" height="14" fill="#d81c0c" opacity="0.85"/><ellipse cx="15.5" cy="12" rx="3" ry="4" fill="#d82410" opacity="0.7"/><ellipse cx="10.6" cy="7.4" rx="2.3" ry="2.1" fill="#fff"/><ellipse cx="9.2" cy="10.6" rx="1.5" ry="1.2" fill="#ffe0f0"/><ellipse cx="16" cy="15" rx="1.6" ry="1.6" fill="#e83060"/><ellipse cx="13.2" cy="5" rx="1.4" ry="1.4" fill="#ffd860"/><polygon points="10.5,7.5 15,3 16,4.5" fill="#ffd070"/><polygon points="10.5,7.5 5,3.5 4.5,5" fill="#ffb040"/><polygon points="10,8 6,15 8,15.5" fill="#ffa030"/><polygon points="11,8 15.5,13 14,14" fill="#ffb850"/><polygon points="0,19 0,14 5,19" fill="#2a0402"/><polygon points="20,19 20,15 15,19" fill="#30040a"/></g><rect x="0.700" y="0.700" width="18.600" height="17.600" fill="none" stroke="#2c170e" stroke-width="1.400"/></svg></div>
<div class="t" style="left:409.1px;top:605.21px;letter-spacing:-0.495px">sk_10</div>
<div class="t" style="left:518.2px;top:605.21px">3</div>
<div class="t" style="left:631.6px;top:605.21px;letter-spacing:0.481px">Magic</div>
<svg class="dd" style="left:791.1px;top:613.72px" viewBox="0 0 9.600 5"><path d="M0 0H9.600L4.800 5z" fill="#0c0c0c"/></svg>
<div class="t" style="left:819.3px;top:605.21px;width:341.44px;overflow:hidden;letter-spacing:0.020px">Gain 1 energy when comboed with another card.</div>
<div class="t c" style="left:0.3px;width:87.5px;top:641.60px">11</div>
<div class="t" style="left:97.8px;top:641.60px;letter-spacing:-0.380px">sk11</div>
<div class="t" style="left:232.7px;top:641.60px;letter-spacing:0.137px">Headshot</div>
<div class="sk" style="left:378.6px;top:642.06px"><svg width="20" height="19" viewBox="0 0 20 19"><defs><filter id="b11" x="-30%" y="-30%" width="160%" height="160%"><feGaussianBlur stdDeviation="0.8"/></filter><linearGradient id="g11" x1="0" x2="0" y1="0" y2="1"><stop offset="0" stop-color="#140000"/><stop offset=".2" stop-color="#4a0000"/><stop offset=".42" stop-color="#d80c0c"/><stop offset=".62" stop-color="#fa2018"/><stop offset="1" stop-color="#ee3828"/></linearGradient></defs><rect width="20" height="19" fill="url(#g11)"/><g filter="url(#b11)"><polygon points="4,18.5 6,13.5 7.8,15 9.3,11.5 10.8,14.5 12.8,13 14,16 15.500,18.5" fill="#fff6e0"/><ellipse cx="9.3" cy="16.8" rx="4.8" ry="2.2" fill="#fffbe8"/><ellipse cx="16" cy="15" rx="2" ry="2" fill="#ff5030"/><ellipse cx="4" cy="13.5" rx="1.5" ry="2" fill="#ff4838"/><ellipse cx="13" cy="9" rx="2" ry="1.5" fill="#ff5a50" opacity="0.7"/></g><rect x="0.700" y="0.700" width="18.600" height="17.600" fill="none" stroke="#2c170e" stroke-width="1.400"/></svg></div>
<div class="t" style="left:409.1px;top:641.60px;letter-spacing:-0.600px">sk_11</div>
<div class="t" style="left:518.2px;top:641.60px">1</div>
<div class="t" style="left:631.6px;top:641.60px;letter-spacing:0.330px">Physical</div>
<svg class="dd" style="left:791.1px;top:650.11px" viewBox="0 0 9.600 5"><path d="M0 0H9.600L4.800 5z" fill="#0c0c0c"/></svg>
<div class="t" style="left:819.3px;top:641.60px;width:341.44px;overflow:hidden;letter-spacing:0.055px">Disable critical strikes on this Axie during this round.</div>
<div class="t c" style="left:0.3px;width:87.5px;top:677.99px">12</div>
<div class="t" style="left:97.8px;top:677.99px;letter-spacing:0.064px">sk12</div>
<div class="t" style="left:232.7px;top:677.99px;letter-spacing:-0.048px">Heart Break</div>
<div class="sk" style="left:378.6px;top:678.45px"><svg width="20" height="19" viewBox="0 0 20 19"><defs><filter id="b12" x="-30%" y="-30%" width="160%" height="160%"><feGaussianBlur stdDeviation="0.75"/></filter></defs><rect width="20" height="19" fill="#0940b8"/><g filter="url(#b12)"><polygon points="11,9 17,7.5 17.5,18 10,18" fill="#10bcf8"/><ellipse cx="4.5" cy="15" rx="1.5" ry="2" fill="#18a8f4"/><ellipse cx="6.5" cy="3.5" rx="2" ry="1" fill="#168af0"/><ellipse cx="16" cy="3.5" rx="1" ry="1" fill="#168af0"/><ellipse cx="12.5" cy="16" rx="2" ry="2" fill="#20f0ff"/><polygon points="6.3,4.5 9,4.5 5.2,13.5 2.8,13.5" fill="#030c30"/><polygon points="12.6,3 15.4,3.6 9.8,17 7,17" fill="#020820"/><ellipse cx="13.5" cy="5" rx="1.2" ry="1.2" fill="#020818"/><ellipse cx="4.8" cy="9" rx="1.5" ry="1.5" fill="#031040"/><ellipse cx="15.5" cy="9.5" rx="1.5" ry="0.8" fill="#04205a"/><ellipse cx="14.5" cy="14" rx="1.1" ry="1.1" fill="#0a3a9a"/><ellipse cx="9" cy="5" rx="0.9" ry="1.6" fill="#020a2a"/><ellipse cx="3" cy="5" rx="1.2" ry="1.5" fill="#062880"/></g><rect x="0.700" y="0.700" width="18.600" height="17.600" fill="none" stroke="#2c170e" stroke-width="1.400"/></svg></div>
<div class="t" style="left:409.1px;top:677.99px;letter-spacing:-0.686px">sk_12</div>
<div class="t" style="left:518.2px;top:677.99px">8</div>
<div class="t" style="left:631.6px;top:677.99px;letter-spacing:0.481px">Magic</div>
<svg class="dd" style="left:791.1px;top:686.50px" viewBox="0 0 9.600 5"><path d="M0 0H9.600L4.800 5z" fill="#0c0c0c"/></svg>
<div class="t" style="left:819.3px;top:677.99px;width:341.44px;overflow:hidden;letter-spacing:0.157px">Target cannot enter Last Stand if this card breaks shield.</div>
<div class="t c" style="left:0.3px;width:87.5px;top:714.37px">13</div>
<div class="t" style="left:97.8px;top:714.37px;letter-spacing:-0.256px">sk13</div>
<div class="t" style="left:232.7px;top:714.37px;letter-spacing:0.306px">All-out Shot</div>
<div class="sk" style="left:378.6px;top:714.83px"><svg width="20" height="19" viewBox="0 0 20 19"><defs><filter id="b13" x="-30%" y="-30%" width="160%" height="160%"><feGaussianBlur stdDeviation="0.6"/></filter><radialGradient id="g13"><stop offset="0" stop-color="#c8ffff"/><stop offset=".45" stop-color="#38b8ff"/><stop offset=".8" stop-color="#2060f0" stop-opacity=".7"/><stop offset="1" stop-color="#2040e0" stop-opacity="0"/></radialGradient></defs><rect width="20" height="19" fill="#030310"/><g filter="url(#b13)"><polygon points="3,10.5 6,10 9,14 7,15" fill="#7a20e0"/><polygon points="10,12 14,8.5 15,10 11,13.5" fill="#6a20d8"/><ellipse cx="16" cy="7.5" rx="1.3" ry="1.3" fill="#c050f0"/><circle cx="7.5" cy="7.8" r="3.8" fill="url(#g13)"/><circle cx="12.8" cy="7.3" r="3" fill="url(#g13)"/><circle cx="15.3" cy="13.6" r="3.6" fill="url(#g13)"/><circle cx="10.3" cy="11.7" r="2.3" fill="url(#g13)"/><ellipse cx="2.3" cy="7.8" rx="1.2" ry="1.2" fill="#e0f8ff"/><ellipse cx="4.8" cy="13.8" rx="2.4" ry="1.8" fill="#fff"/><ellipse cx="2.8" cy="16" rx="1.2" ry="1.2" fill="#f040c0"/><ellipse cx="5.5" cy="17.8" rx="2.2" ry="1" fill="#40d0f0"/><ellipse cx="13" cy="18.3" rx="1.5" ry="0.8" fill="#30a0e0"/></g><rect x="0.700" y="0.700" width="18.600" height="17.600" fill="none" stroke="#2c170e" stroke-width="1.400"/></svg></div>
<div class="t" style="left:409.1px;top:714.37px;letter-spacing:-0.687px">sk_13</div>
<div class="t" style="left:518.2px;top:714.37px">3</div>
<div class="t" style="left:631.6px;top:714.37px;letter-spacing:0.330px">Physical</div>
<svg class="dd" style="left:791.1px;top:722.88px" viewBox="0 0 9.600 5"><path d="M0 0H9.600L4.800 5z" fill="#0c0c0c"/></svg>
<div class="t" style="left:819.3px;top:714.37px;width:341.44px;overflow:hidden;letter-spacing:-0.170px">End target’s Last Stand.</div>
<div class="t c" style="left:0.3px;width:87.5px;top:750.76px">14</div>
<div class="t" style="left:97.8px;top:750.76px;letter-spacing:0.128px">sk14</div>
<div class="t" style="left:232.7px;top:750.76px;letter-spacing:0.373px">Blackmail</div>
<div class="sk" style="left:378.6px;top:751.22px"><svg width="20" height="19" viewBox="0 0 20 19"><defs><filter id="b14" x="-30%" y="-30%" width="160%" height="160%"><feGaussianBlur stdDeviation="1.1"/></filter></defs><rect width="20" height="19" fill="#12031c"/><g filter="url(#b14)"><ellipse cx="6" cy="10.5" rx="5" ry="7" fill="#5a1ef0"/><ellipse cx="11.5" cy="10.5" rx="6.5" ry="7.5" fill="#f03af0"/><polygon points="9,11.5 12.8,4.5 16.5,13 13,15.500 9.5,14" fill="#fff"/><ellipse cx="12.2" cy="10.5" rx="3" ry="3.2" fill="#fff"/><ellipse cx="7" cy="8" rx="1.4" ry="0.8" fill="#ffd0ff"/><polygon points="0,0 8,0 0,8" fill="#08020f"/><rect x="0" y="0" width="20" height="1.8" fill="#0a0312"/></g><rect x="0.700" y="0.700" width="18.600" height="17.600" fill="none" stroke="#2c170e" stroke-width="1.400"/></svg></div>
<div class="t" style="left:409.1px;top:750.76px;letter-spacing:-0.735px">sk_14</div>
<div class="t" style="left:518.2px;top:750.76px">2</div>
<div class="t" style="left:631.6px;top:750.76px;letter-spacing:0.481px">Magic</div>
<svg class="dd" style="left:791.1px;top:759.27px" viewBox="0 0 9.600 5"><path d="M0 0H9.600L4.800 5z" fill="#0c0c0c"/></svg>
<div class="t" style="left:819.3px;top:750.76px;width:341.44px;overflow:hidden;letter-spacing:-0.035px">Draw a card if target is in Last Stand.</div>
<div class="t c" style="left:0.3px;width:87.5px;top:787.14px">15</div>
<div class="t" style="left:97.8px;top:787.14px;letter-spacing:-0.256px">sk15</div>
<div class="t" style="left:232.7px;top:787.14px;letter-spacing:-0.164px">Cool Breeze</div>
<div class="sk" style="left:378.6px;top:787.60px"><svg width="20" height="19" viewBox="0 0 20 19"><defs><filter id="b15" x="-30%" y="-30%" width="160%" height="160%"><feGaussianBlur stdDeviation="0.9"/></filter></defs><rect width="20" height="19" fill="#0a62ea"/><g filter="url(#b15)"><rect x="0" y="0" width="20" height="2" fill="#041040"/><polygon points="5,4.5 9,4.5 17,17 12.5,17" fill="#10dcff"/><polygon points="13,3 17,3.5 7.5,17 3.5,16.5" fill="#10dcff"/><ellipse cx="11" cy="12" rx="5.6" ry="5.4" fill="#14d8ff"/><ellipse cx="5" cy="12" rx="2.5" ry="3" fill="#18a8ff"/><ellipse cx="16" cy="13" rx="2.2" ry="3" fill="#18b0ff"/><ellipse cx="10.8" cy="14.3" rx="2.2" ry="2.8" fill="#d8ffff"/><polygon points="8.5,1.5 11,1.5 10,7" fill="#041a70"/><ellipse cx="3.5" cy="7.5" rx="1.3" ry="1.3" fill="#0a3ab8"/><ellipse cx="17" cy="8.5" rx="1" ry="1" fill="#0a40c0"/></g><rect x="0.700" y="0.700" width="18.600" height="17.600" fill="none" stroke="#2c170e" stroke-width="1.400"/></svg></div>
<div class="t" style="left:518.2px;top:787.14px">1</div>
<div class="t" style="left:631.6px;top:787.14px;letter-spacing:0.481px">Magic</div>
<svg class="dd" style="left:791.1px;top:795.65px" viewBox="0 0 9.600 5"><path d="M0 0H9.600L4.800 5z" fill="#0c0c0c"/></svg>
<div class="t" style="left:819.3px;top:787.14px;width:341.44px;overflow:hidden;letter-spacing:-0.020px">Skip targets that are in Last Stand.</div>
<div class="t c" style="left:0.3px;width:87.5px;top:823.53px;height:5.07px;overflow:hidden">16</div>
<div class="abs" style="left:89px;top:269.8px;width:138.2px;height:39px;border:3px solid #4285f4;background:rgba(66,133,244,.06)"></div>
<div class="abs" style="left:219.4px;top:300.9px;width:10.2px;height:9.8px;background:#4285f4;border:1px solid #fff"></div>
<div class="abs" style="left:90.7px;top:804.8px;width:1087.4px;height:6px;background:#fff"></div>
<svg class="abs" style="left:0;top:0;width:1200px;height:863px" viewBox="0 0 1200 863"><g stroke="#e1e1e1" stroke-width="1.46"><path d="M225.80 804V811"/><path d="M370.30 804V811"/><path d="M510.30 804V811"/><path d="M625.00 804V811"/><path d="M811.30 804V811"/></g></svg>
<div class="t" style="left:409.1px;top:787.14px;letter-spacing:-0.687px">sk_15</div>
<div class="abs" style="left:1180.7px;top:270.3px;width:16.4px;height:539.5px;background:#f1f1f1"></div>
<div class="abs" style="left:1181px;top:293.5px;width:15.2px;height:71.3px;border-radius:7.6px;background:#9b9b9b"></div>
<svg class="abs" style="left:1183.3px;top:278.4px;width:11px;height:6px" viewBox="0 0 11 6"><path d="M0 6L5.500 0L11 6z" fill="#505050"/></svg>
<svg class="abs" style="left:1183.3px;top:795px;width:11px;height:6.4px" viewBox="0 0 11 6"><path d="M0 0L5.500 6L11 0z" fill="#505050"/></svg>
<div class="abs" style="left:90.7px;top:809.6px;width:1089.5px;height:19.0px;background:#f1f1f1;border-top:1px solid #e7e7e7"></div>
<svg class="abs" style="left:0;top:0;width:1200px;height:863px" viewBox="0 0 1200 863"><g stroke="#dedede" stroke-width="1.46"><path d="M90.7 815.9H1178.3"/><path d="M225.80 810.6V828.6"/><path d="M370.30 810.6V828.6"/><path d="M510.30 810.6V828.6"/><path d="M625.00 810.6V828.6"/><path d="M811.30 810.6V828.6"/></g></svg>
<div class="abs" style="left:112.7px;top:811.4px;width:281.1px;height:16px;border-radius:8px;background:#9b9b9b"></div>
<svg class="abs" style="left:97px;top:814.6px;width:7px;height:10.2px" viewBox="0 0 6 11" preserveAspectRatio="none"><path d="M6 0L0 5.500L6 11z" fill="#50504a"/></svg>
<svg class="abs" style="left:1164.2px;top:813.8px;width:6.6px;height:11.4px" viewBox="0 0 6 11" preserveAspectRatio="none"><path d="M0 0L6 5.500L0 11z" fill="#50504a"/></svg>
<div class="abs" style="left:1178.3px;top:809.8px;width:19.0px;height:18.8px;background:#fff"></div>
<div class="abs" style="left:0;top:828.6px;width:1200px;height:34.4px;background:#e0e0e0"></div>
<svg class="abs" style="left:0;top:0;width:4px;height:863px" viewBox="0 0 4 863"><rect x="1.700" y="124" width="1.100" height="704.600" fill="#fff" opacity=".8"/><rect x="0" y="0" width="1.800" height="863" fill="#a4a4a4"/><rect x="0" y="707.600" width="1.800" height="10.600" fill="#4c4c4c"/><rect x="0" y="696" width="1.800" height="11.600" fill="#b2b2b2"/><rect x="0" y="718.200" width="1.800" height="10" fill="#b2b2b2"/></svg>
<div class="abs" style="left:1197.3px;top:0;width:2.7px;height:863px;background:#b2b2b2"></div>
<div class="abs" style="left:1197.3px;top:28px;width:1.3px;height:835px;background:#939393"></div>
</body></html>
